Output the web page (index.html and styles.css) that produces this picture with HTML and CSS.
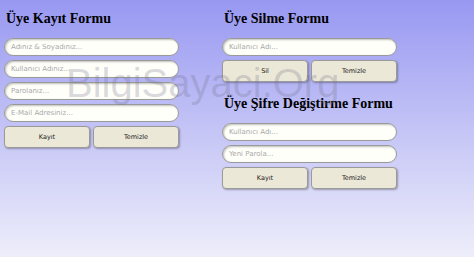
FILE: index.html
```html
<!DOCTYPE html>
<html lang="tr">
<head>
    <meta charset="UTF-8">
    <title>Üye İşlemleri</title>
    <link rel="stylesheet" href="styles.css">
</head>
<body>
    <div class="page">
        <div class="column">
            <h1>Üye Kayıt Formu</h1>
            <input type="text" class="field" placeholder="Adınız &amp; Soyadınız...">
            <input type="text" class="field" placeholder="Kullanıcı Adınız...">
            <input type="password" class="field" placeholder="Parolanız...">
            <input type="text" class="field" placeholder="E-Mail Adresiniz...">
            <div class="buttons">
                <button class="btn">Kayıt</button>
                <button class="btn">Temizle</button>
            </div>
        </div>

        <div class="column">
            <h1>Üye Silme Formu</h1>
            <input type="text" class="field" placeholder="Kullanıcı Adı...">
            <div class="buttons">
                <button class="btn">Sil</button>
                <button class="btn">Temizle</button>
            </div>

            <h1 class="second">Üye Şifre Değiştirme Formu</h1>
            <input type="text" class="field" placeholder="Kullanıcı Adı...">
            <input type="password" class="field" placeholder="Yeni Parola...">
            <div class="buttons">
                <button class="btn">Kayıt</button>
                <button class="btn">Temizle</button>
            </div>
        </div>
    </div>

    <div class="watermark">BilgiSayaci.Org</div>
</body>
</html>
```

FILE: styles.css
```css
html, body {
    height: 100%;
}

body {
    margin: 0;
    background: linear-gradient(to bottom, #9898f2 0%, #c4c4f6 50%, #eeeefb 100%);
    font-family: "Liberation Sans", Arial, sans-serif;
    position: relative;
    overflow: hidden;
}

.page {
    display: flex;
    gap: 43px;
    padding: 11px 0 0 4px;
}

.column {
    display: flex;
    flex-direction: column;
    gap: 4px;
    width: 175px;
}

h1 {
    margin: 0 0 7px 2px;
    font-family: "Liberation Serif", "Times New Roman", serif;
    font-size: 14px;
    line-height: 16px;
    font-weight: bold;
    color: #000;
    white-space: nowrap;
}

h1.second {
    margin-top: 10px;
}

.field {
    box-sizing: border-box;
    width: 175px;
    height: 18px;
    margin: 0;
    padding: 0 6px;
    border: 1px solid #9a9a9a;
    border-radius: 9px;
    background: #fffffa;
    box-shadow: inset 1px 1px 2px rgba(0, 0, 0, 0.25);
    font-family: "DejaVu Sans", sans-serif;
    font-size: 7px;
    outline: none;
}

.field::placeholder {
    color: #a8a8a8;
}

.buttons {
    display: flex;
    gap: 3px;
}

.btn {
    flex: 1;
    height: 22px;
    margin: 0;
    padding: 0;
    border: 1px solid #9a9a9a;
    border-radius: 4px;
    background: #ece8d8;
    box-shadow: 1px 1px 2px rgba(0, 0, 0, 0.3);
    font-family: "DejaVu Sans", sans-serif;
    font-size: 6.5px;
    color: #222;
}

.watermark {
    position: absolute;
    left: 66px;
    top: 60px;
    font-family: "Liberation Sans", Arial, sans-serif;
    font-size: 40px;
    line-height: 46px;
    color: rgba(110, 110, 130, 0.26);
    pointer-events: none;
    white-space: nowrap;
}
```
